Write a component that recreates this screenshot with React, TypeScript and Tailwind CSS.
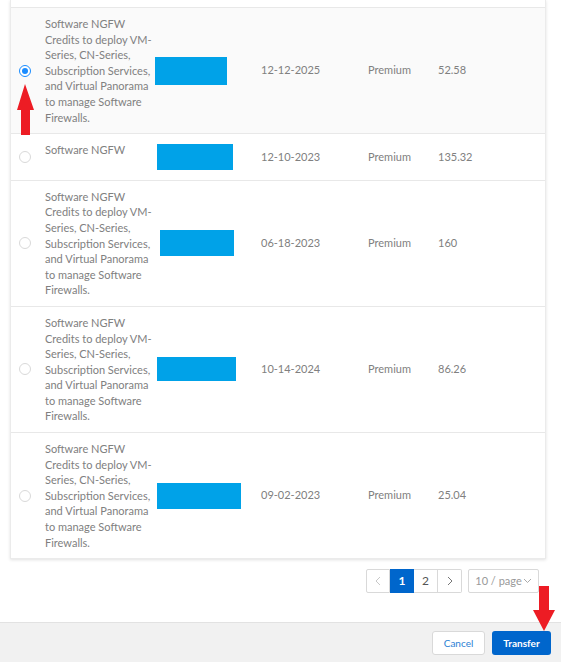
import React from "react";

const LONG =
  "Software NGFW Credits to deploy VM-Series, CN-Series, Subscription Services, and Virtual Panorama to manage Software Firewalls.";

type Row = {
  desc: string;
  extraLine?: boolean;
  date: string;
  value: string;
  rx: number;
  rw: number;
  rh: number;
  selected?: boolean;
};

const rows: Row[] = [
  { desc: LONG, date: "12-12-2025", value: "52.58", rx: 2, rw: 72, rh: 28, selected: true },
  { desc: "Software NGFW", extraLine: true, date: "12-10-2023", value: "135.32", rx: 4, rw: 76, rh: 26 },
  { desc: LONG, date: "06-18-2023", value: "160", rx: 7, rw: 74, rh: 26 },
  { desc: LONG, date: "10-14-2024", value: "86.26", rx: 4, rw: 79, rh: 24 },
  { desc: LONG, date: "09-02-2023", value: "25.04", rx: 4, rw: 84, rh: 26 },
];

function Radio({ checked }: { checked?: boolean }) {
  return (
    <span
      className={
        "flex h-[12px] w-[12px] items-center justify-center rounded-full border bg-white " +
        (checked ? "border-[#1a8cff]" : "border-[#d9d9d9]")
      }
    >
      {checked && <span className="h-[6px] w-[6px] rounded-full bg-[#1a8cff]" />}
    </span>
  );
}

export default function App() {
  return (
    <div
      className="relative h-[662px] w-[561px] overflow-hidden bg-white text-[11px] text-[#808080]"
      style={{ fontFamily: "Lato, 'Open Sans', sans-serif" }}
    >
      <div>
        <div className="ml-[10px] w-[536px] border-x border-b border-[#ebebeb] bg-white shadow-[0_1px_3px_rgba(0,0,0,0.12)]">
          <div className="h-[8px] border-b border-[#e8e8e8]" />
          {rows.map((r, i) => (
            <div
              key={i}
              className={
                "grid grid-cols-[26px_116px_100px_107px_70px_1fr] items-center border-b border-[#e8e8e8] last:border-b-0 " +
                (r.selected ? "bg-[#fafafa]" : "bg-white")
              }
            >
              <div className="flex justify-center pl-[1px]">
                <Radio checked={r.selected} />
              </div>
              <div className="py-[8px] pl-[8px] pr-[1px] leading-[15.6px]">
                <div>{r.desc}</div>
                {r.extraLine && <div className="h-[14px]" />}
              </div>
              <div className="flex">
                <div
                  className="bg-[#00a2e8]"
                  style={{ marginLeft: r.rx, width: r.rw, height: r.rh }}
                />
              </div>
              <div className="pl-[8px]">{r.date}</div>
              <div className="pl-[8px]">Premium</div>
              <div className="pl-[8px]">{r.value}</div>
            </div>
          ))}
        </div>

        <div className="mr-[22px] mt-[10px] flex justify-end">
          <div className="flex">
            <button className="flex h-[24px] w-[24px] items-center justify-center rounded-l-[2px] border border-[#d9d9d9] bg-white text-[#c8c8c8]">
              <svg width="8" height="10" viewBox="0 0 8 10" fill="none" stroke="currentColor" strokeWidth="1">
                <path d="M6 1 L2 5 L6 9" />
              </svg>
            </button>
            <button className="flex h-[24px] w-[24px] items-center justify-center bg-[#0066cc] text-[12px] font-bold text-white">
              1
            </button>
            <button className="flex h-[24px] w-[24px] items-center justify-center border-y border-r border-[#d9d9d9] bg-white text-[12px] text-[#555]">
              2
            </button>
            <button className="flex h-[24px] w-[24px] items-center justify-center rounded-r-[2px] border-y border-r border-[#d9d9d9] bg-white text-[#777]">
              <svg width="8" height="10" viewBox="0 0 8 10" fill="none" stroke="currentColor" strokeWidth="1">
                <path d="M2 1 L6 5 L2 9" />
              </svg>
            </button>
          </div>
          <button className="ml-[6px] flex h-[24px] w-[71px] items-center justify-center rounded-[2px] border border-[#d9d9d9] bg-white text-[11px] text-[#999]">
            <span>10 / page</span>
            <svg width="9" height="6" viewBox="0 0 9 6" fill="none" stroke="#aaa" strokeWidth="1" className="ml-[1px]">
              <path d="M1 1 L4.5 4.5 L8 1" />
            </svg>
          </button>
        </div>
      </div>

      <div className="absolute bottom-0 left-0 right-0 flex h-[40px] items-center justify-end gap-[7px] border-t border-[#e2e2e2] bg-[#f1f1f1] pr-[10px] pt-[1px]">
        <button className="h-[24px] w-[53px] rounded-[3px] border border-[#d9d9d9] bg-white text-[10px] text-[#2a7fd4]">
          Cancel
        </button>
        <button className="h-[24px] w-[59px] rounded-[3px] bg-[#0066cc] text-[10px] font-bold text-white">
          Transfer
        </button>
      </div>

      <svg className="pointer-events-none absolute left-0 top-0" width="561" height="662">
        <polygon points="25,84 34,110 30,110 30,135 21,135 21,110 17,110" fill="#ed1c24" />
        <polygon points="539,586 549,586 549,610 555,610 544,631 533,610 539,610" fill="#ed1c24" />
      </svg>
    </div>
  );
}
